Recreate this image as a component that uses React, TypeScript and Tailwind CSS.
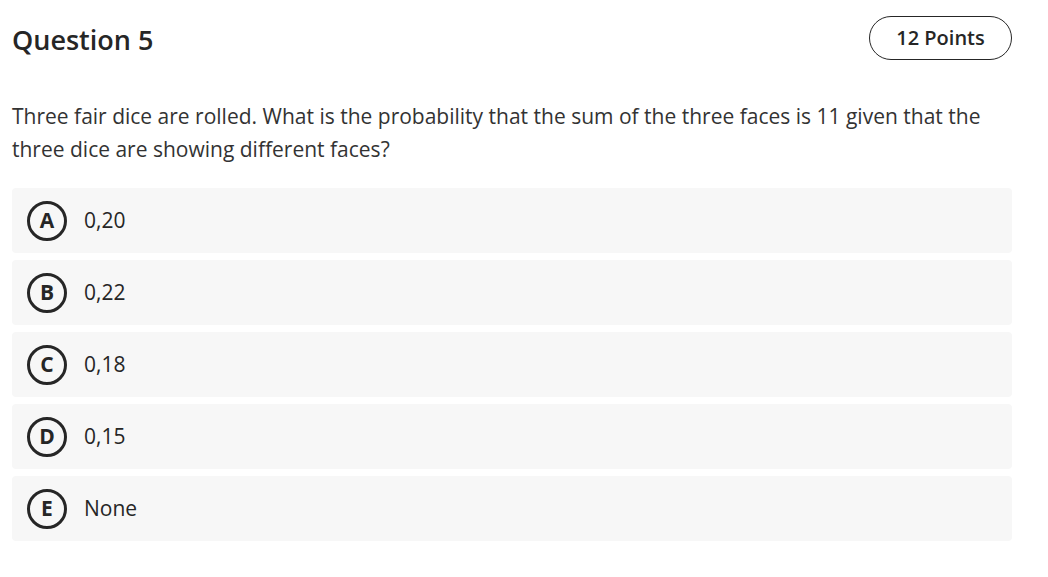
const options = [
  { key: 'A', label: '0,20' },
  { key: 'B', label: '0,22' },
  { key: 'C', label: '0,18' },
  { key: 'D', label: '0,15' },
  { key: 'E', label: 'None' },
];

export default function App() {
  return (
    <div className="min-h-screen bg-white text-[#262626]" style={{ fontFamily: '"Open Sans", sans-serif' }}>
      <div className="w-[1000px] ml-3 pt-4">
        <div className="flex items-center justify-between h-[44px]">
          <h1 className="mt-[3px] text-[27px] font-semibold leading-none">Question 5</h1>
          <div className="h-[44px] w-[143px] rounded-full border border-[#262626] flex items-center justify-center text-[20px] font-semibold">
            12 Points
          </div>
        </div>
        <p className="mt-[40px] text-[21px] leading-[33px] text-[#333333]">
          Three fair dice are rolled. What is the probability that the sum of the three faces is 11 given that the three dice are showing different faces?
        </p>
        <div className="mt-[22px] flex flex-col gap-[7px]">
          {options.map(opt => (
            <div key={opt.key} className="h-[65px] rounded-[4px] bg-[#f7f7f7] flex items-center pl-[15px]">
              <span className="w-[40px] h-[40px] rounded-full border-[3px] border-[#262626] flex items-center justify-center text-[21px] font-bold leading-none">
                {opt.key}
              </span>
              <span className="ml-[17px] text-[21px]">{opt.label}</span>
            </div>
          ))}
        </div>
      </div>
    </div>
  );
}
